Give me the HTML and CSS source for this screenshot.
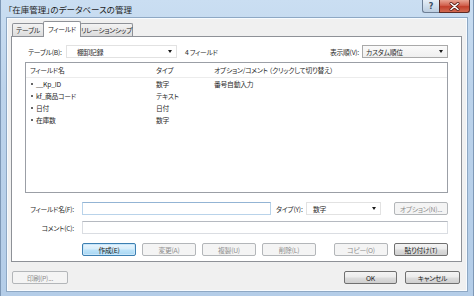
FILE: index.html
```html
<!DOCTYPE html>
<html lang="ja">
<head>
    <meta charset="UTF-8">
    <title>データベースの管理</title>
    <link rel="stylesheet" href="styles.css">
</head>
<body>
    <div class="window">
        <div class="titlebar">
            <span class="title">「在庫管理」のデータベースの管理</span>
            <div class="caption-buttons">
                <span class="cap help">?</span>
                <span class="cap close">
                    <svg width="11" height="9" viewBox="0 0 11 9">
                        <path d="M2 1.5 L9 7.5 M9 1.5 L2 7.5" stroke="#5a1f18" stroke-width="3" stroke-linecap="round"/>
                        <path d="M2 1.5 L9 7.5 M9 1.5 L2 7.5" stroke="#ffffff" stroke-width="1.6" stroke-linecap="round"/>
                    </svg>
                </span>
            </div>
        </div>

        <div class="client">
            <div class="tabs">
                <span class="tab tab-table">テーブル</span>
                <span class="tab tab-field active">フィールド</span>
                <span class="tab tab-rel">リレーションシップ</span>
            </div>

            <div class="panel">
                <div class="table-row">
                    <span class="lbl-table">テーブル(B):</span>
                    <div class="combo combo-table"><span>棚卸記録</span><i class="arrow"></i></div>
                    <span class="count">4 フィールド</span>
                    <span class="sort-label">表示順(V):</span>
                    <div class="combo combo-sort"><span>カスタム順位</span><i class="arrow"></i></div>
                </div>

                <div class="list">
                    <div class="list-row list-head">
                        <span class="col-name">フィールド名</span>
                        <span class="col-type">タイプ</span>
                        <span class="col-opt">オプション/コメント （クリックして切り替え）</span>
                    </div>
                    <!-- field rows -->
                    <div class="list-row">
                        <span class="col-name"><b class="dot"></b>__Kp_ID</span>
                        <span class="col-type">数字</span>
                        <span class="col-opt">番号自動入力</span>
                    </div>
                    <div class="list-row">
                        <span class="col-name"><b class="dot"></b>kf_商品コード</span>
                        <span class="col-type">テキスト</span>
                        <span class="col-opt"></span>
                    </div>
                    <div class="list-row">
                        <span class="col-name"><b class="dot"></b>日付</span>
                        <span class="col-type">日付</span>
                        <span class="col-opt"></span>
                    </div>
                    <div class="list-row">
                        <span class="col-name"><b class="dot"></b>在庫数</span>
                        <span class="col-type">数字</span>
                        <span class="col-opt"></span>
                    </div>
                </div>

                <div class="form-row">
                    <span class="form-label">フィールド名(F):</span>
                    <div class="textbox textbox-name"></div>
                    <span class="type-label">タイプ(Y):</span>
                    <div class="combo combo-type"><span>数字</span><i class="arrow"></i></div>
                    <button class="btn disabled btn-option">オプション(N)...</button>
                </div>

                <div class="form-row comment-row">
                    <span class="form-label">コメント(C):</span>
                    <div class="textbox textbox-comment"></div>
                </div>

                <div class="action-row">
                    <button class="btn default">作成(E)</button>
                    <button class="btn disabled">変更(A)</button>
                    <button class="btn disabled">複製(U)</button>
                    <button class="btn disabled">削除(L)</button>
                    <button class="btn disabled btn-copy">コピー(O)</button>
                    <button class="btn">貼り付け(T)</button>
                </div>
            </div>

            <div class="footer">
                <button class="btn disabled btn-print">印刷(P)...</button>
                <button class="btn btn-ok">OK</button>
                <button class="btn btn-cancel">キャンセル</button>
            </div>
        </div>
    </div>
</body>
</html>
```

FILE: styles.css
```css
body {
    margin: 0;
    padding: 0;
    font-family: "Noto Sans CJK JP", sans-serif;
    font-feature-settings: "palt";
    font-size: 6.8px;
    letter-spacing: -0.25px;
    color: #2a2a2a;
    white-space: nowrap;
}

.window {
    width: 474px;
    height: 296px;
    box-sizing: border-box;
    display: flex;
    flex-direction: column;
    background: linear-gradient(#cadef2, #bcd3eb 30%, #b4cde8);
    box-shadow: inset 1px 0 0 #7e98b6, inset -1px 0 0 #7e98b6;
}

/* Title bar */
.titlebar {
    height: 19px;
    display: flex;
    align-items: flex-start;
    padding-left: 8px;
}

.title {
    font-size: 8.5px;
    letter-spacing: 0;
    line-height: 19px;
    color: #1e1e1e;
}

.caption-buttons {
    margin-left: auto;
    margin-right: 4px;
    display: flex;
}

.cap {
    height: 13px;
    box-sizing: border-box;
    display: flex;
    align-items: center;
    justify-content: center;
    border: 1px solid #6d7f96;
    border-top: none;
}

.help {
    width: 17px;
    border-radius: 0 0 0 3px;
    border-right: none;
    background: linear-gradient(#e6eef7, #d0deec 50%, #bccde0);
    color: #3b4d63;
    font-family: "DejaVu Sans", sans-serif;
    font-size: 8px;
    font-weight: bold;
}

.close {
    width: 31px;
    border-color: #5e2a24;
    border-radius: 0 0 3px 0;
    background: linear-gradient(#e8a493, #d2614e 45%, #c2402c 55%, #d26a52);
}

/* Client area */
.client {
    margin: 0 8px;
    height: 271px;
    box-sizing: border-box;
    background: #f0f0f0;
    padding: 2px 4px 0 3px;
    box-shadow: 0 0 0 1px #f7fbff, 0 0 0 2px #8ea8c4;
}

.tabs {
    display: flex;
    align-items: flex-end;
    height: 15px;
}

.tab {
    height: 13px;
    box-sizing: border-box;
    border: 1px solid #8e9197;
    border-bottom: none;
    background: linear-gradient(#f3f3f3, #e8e8e8 50%, #dcdcdc);
    display: flex;
    align-items: center;
    justify-content: center;
    margin-right: -1px;
    border-radius: 2px 2px 0 0;
}

.tab-table { width: 32px; margin-left: 1px; }
.tab-field { width: 38px; }
.tab-rel { width: 53px; }

.tab.active {
    height: 16px;
    background: #ffffff;
    position: relative;
    z-index: 1;
    margin-bottom: -1px;
    padding-bottom: 1px;
}

.panel {
    height: 226px;
    box-sizing: border-box;
    border: 1px solid #8e9197;
    background: #ffffff;
    padding: 8px 13px 0 13px;
}

.table-row {
    display: flex;
    align-items: center;
    height: 13px;
}

.lbl-table {
    width: 41px;
    padding-left: 3px;
    box-sizing: border-box;
}

.combo {
    height: 13px;
    box-sizing: border-box;
    display: flex;
    align-items: center;
    padding: 0 4px 0 10px;
    border: 1px solid #e2e2e2;
    background: #ffffff;
}

.combo span {
    flex: 1;
}

.arrow {
    width: 0;
    height: 0;
    border-left: 2.5px solid transparent;
    border-right: 2.5px solid transparent;
    border-top: 3px solid #1a1a1a;
}

.combo-table { width: 111px; }

.count {
    margin-left: 8px;
}

.sort-label {
    margin-left: auto;
    margin-right: 3px;
}

.combo-sort {
    width: 86px;
    padding-left: 3px;
    border-color: #a9a9a9;
    background: linear-gradient(#fafafa, #efefef);
}

/* Field list */
.list {
    margin-top: 4px;
    height: 131px;
    box-sizing: border-box;
    border: 1px solid #9b9fa6;
    background: #ffffff;
}

.list-row {
    display: flex;
    align-items: center;
    height: 12px;
    padding-left: 4px;
}

.list-head {
    height: 14px;
    border-bottom: 1px solid #ececec;
}

.col-name {
    width: 126px;
    display: flex;
    align-items: center;
}

.col-type {
    width: 58px;
}

.dot {
    width: 2px;
    height: 2px;
    border-radius: 50%;
    background: #333;
    margin: 0 3px 0 1px;
}

/* Edit area */
.form-row {
    display: flex;
    align-items: center;
    height: 13px;
    margin-top: 9px;
}

.comment-row {
    margin-top: 6px;
}

.form-label {
    width: 49px;
    text-align: right;
    margin-right: 8px;
}

.textbox {
    height: 13px;
    box-sizing: border-box;
    background: #ffffff;
    border: 1px solid #dadde2;
    border-top-color: #b5b9c0;
}

.textbox-name {
    width: 189px;
    border-color: #b9d3ea;
    border-top-color: #93b4d4;
}

.textbox-comment {
    flex: 1;
}

.type-label {
    width: 35px;
    padding-left: 5px;
    box-sizing: border-box;
}

.combo-type {
    width: 75px;
    padding-left: 6px;
}

.btn-option {
    margin-left: auto;
    width: 55px;
}

.action-row {
    display: flex;
    gap: 6px;
    margin: 9px 0 0 57px;
}

.btn {
    width: 54px;
    height: 13px;
    box-sizing: border-box;
    padding: 0;
    font: inherit;
    letter-spacing: inherit;
    color: #1a1a1a;
    display: flex;
    align-items: center;
    justify-content: center;
    border: 1px solid #707070;
    border-radius: 2px;
    background: linear-gradient(#f4f4f4, #ebebeb 48%, #dddddd 52%, #cfcfcf);
}

.btn.disabled {
    color: #8d8d8d;
    border-color: #b3b6b9;
    background: #f4f4f4;
}

.btn.default {
    border-color: #3c7fb1;
    background: linear-gradient(#e8f4fc, #d6edfb 48%, #bde3f9 52%, #a8d6f2);
    box-shadow: inset 0 0 0 1px #c8e6fa;
}

.btn-copy {
    margin-left: auto;
}

/* Dialog buttons */
.footer {
    display: flex;
    align-items: center;
    gap: 8px;
    margin-top: 9px;
    padding: 0 2px 0 1px;
}

.btn-print {
    width: 56px;
    margin-right: auto;
}

.btn-ok { width: 53px; }
.btn-cancel { width: 55px; }
```
